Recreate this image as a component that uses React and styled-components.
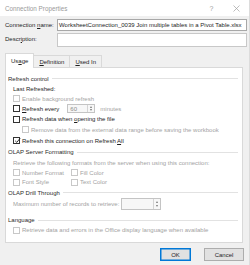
import React from 'react';
import styled, { createGlobalStyle } from 'styled-components';

const Global = createGlobalStyle`
  html, body { margin: 0; padding: 0; background: #f0f0f0; }
  body { font-family: "Liberation Sans", Arial, sans-serif; }
  * { box-sizing: border-box; }
`;

const Window = styled.div`
  width: 250px;
  height: 265px;
  background: #f0f0f0;
  display: flex;
  flex-direction: column;
  overflow: hidden;
  font-size: 6px;
  color: #1e1e1e;
  border-right: 1px solid #dcdcdc;
`;

const TitleBar = styled.div`
  height: 16px;
  background: #fff;
  display: flex;
  align-items: center;
  padding-left: 5px;
  color: #9a9a9a;
  font-size: 6.3px;
`;

const TitleText = styled.div`
  flex: 1;
`;

const TitleButton = styled.div`
  width: 25px;
  height: 16px;
  display: flex;
  align-items: center;
  justify-content: center;
  color: #a0a0a0;
  font-size: 7px;
`;

const Body = styled.div`
  padding: 3px 2px 0 5px;
  display: flex;
  flex-direction: column;
`;

const FieldRow = styled.div`
  display: grid;
  grid-template-columns: 52px 1fr;
  height: ${p => p.$h}px;
  margin-top: ${p => p.$mt || 0}px;
  align-items: ${p => (p.$top ? 'start' : 'center')};
`;

const FieldLabel = styled.label`
  line-height: 8px;
  padding-top: ${p => (p.$top ? 2 : 0)}px;
  color: #1e1e1e;
`;

const TextInput = styled.div`
  height: ${p => p.$h}px;
  background: #fff;
  border: 1px solid ${p => p.$border};
  padding-left: 1px;
  display: flex;
  align-items: center;
  white-space: nowrap;
  overflow: hidden;
  color: #1e1e1e;
`;

const TabStrip = styled.div`
  margin-top: 6px;
  height: 14px;
  display: flex;
  align-items: flex-end;
  position: relative;
  z-index: 1;
`;

const Tab = styled.div`
  height: ${p => (p.$active ? 15 : 12)}px;
  padding: 0 5px;
  display: flex;
  align-items: center;
  background: ${p => (p.$active ? '#fff' : 'transparent')};
  border: 1px solid #d9d9d9;
  border-bottom: none;
  border-left: ${p => (p.$active || p.$first ? '1px solid #d9d9d9' : 'none')};
  margin-bottom: ${p => (p.$active ? -1 : 0)}px;
  color: #1e1e1e;
  white-space: pre;
`;

const Panel = styled.div`
  height: 176px;
  margin-right: 4px;
  background: #fff;
  border: 1px solid #d9d9d9;
  padding: 5px 4px 0 2px;
  display: flex;
  flex-direction: column;
`;

const Row = styled.div`
  height: ${p => p.$h}px;
  margin-top: ${p => p.$mt || 0}px;
  padding-left: ${p => p.$indent || 0}px;
  display: flex;
  align-items: center;
  white-space: nowrap;
  color: ${p => (p.$disabled ? '#a3a3a3' : '#1e1e1e')};
`;

const TwoCol = styled.div`
  height: ${p => p.$h}px;
  padding-left: 5px;
  display: grid;
  grid-template-columns: 58px 1fr;
  align-items: center;
  white-space: nowrap;
`;

const HeadingText = styled.span`
  color: #2b2b2b;
`;

const HeadingLine = styled.span`
  flex: 1;
  height: 1px;
  background: #e2e2e2;
  margin-left: 3px;
`;

const CheckItem = styled.span`
  display: inline-flex;
  align-items: center;
  color: ${p => (p.$disabled ? '#a3a3a3' : '#1e1e1e')};
`;

const CheckLabel = styled.span`
  white-space: pre;
`;

const Box = styled.span`
  width: 7px;
  height: 7px;
  border: 1px solid ${p => (p.$disabled ? '#c8c8c8' : '#333')};
  background: #fff;
  margin-right: 2px;
  position: relative;
  flex: none;
`;

const CheckMark = styled.svg`
  position: absolute;
  left: 0;
  top: -1px;
`;

const Key = styled.span`
  text-decoration: underline;
`;

const Spin = styled.div`
  width: ${p => p.$w}px;
  height: ${p => p.$h}px;
  margin-left: ${p => p.$ml}px;
  margin-right: ${p => p.$mr || 0}px;
  border: 1px solid #c4c4c4;
  background: ${p => p.$bg || '#fff'};
  display: flex;
  align-items: center;
  color: #8a8a8a;
`;

const SpinValue = styled.span`
  flex: 1;
  padding-left: 2px;
`;

const SpinButtons = styled.div`
  width: 7px;
  height: 100%;
  border-left: 1px solid #d4d4d4;
  display: flex;
  flex-direction: column;
  align-items: center;
  justify-content: space-around;
  padding: 1px 0;
`;

const Arrow = styled.span`
  width: 0;
  height: 0;
  border-left: 1.5px solid transparent;
  border-right: 1.5px solid transparent;
  ${p => (p.$up ? 'border-bottom: 2px solid #777;' : 'border-top: 2px solid #777;')}
`;

const ButtonRow = styled.div`
  margin-top: 5px;
  height: 13px;
  display: flex;
  justify-content: flex-end;
  gap: 13px;
  padding-right: 3px;
`;

const Button = styled.div`
  width: ${p => p.$w}px;
  height: 13px;
  display: flex;
  align-items: center;
  justify-content: center;
  background: #e1e1e1;
  border: 1px solid ${p => (p.$primary ? '#0078d7' : '#adadad')};
  box-shadow: ${p => (p.$primary ? 'inset 0 0 0 0.5px #0078d7' : 'none')};
  color: #1e1e1e;
`;

const Check = ({ checked, disabled, children }) => (
  <CheckItem $disabled={disabled}>
    <Box $disabled={disabled}>
      {checked && (
        <CheckMark width="7" height="7" viewBox="0 0 7 7">
          <path d="M1.2 3.8 L2.8 5.4 L6.2 1.2" fill="none" stroke="#222" strokeWidth="0.9" />
        </CheckMark>
      )}
    </Box>
    <CheckLabel>{children}</CheckLabel>
  </CheckItem>
);

const Heading = ({ h, mt, children }) => (
  <Row $h={h} $mt={mt}>
    <HeadingText>{children}</HeadingText>
    <HeadingLine />
  </Row>
);

export default function App() {
  return (
    <>
      <Global />
      <Window>
        <TitleBar>
          <TitleText>Connection Properties</TitleText>
          <TitleButton>?</TitleButton>
          <TitleButton>
            <svg width="7" height="7" viewBox="0 0 7 7">
              <path d="M0.5 0.5 L6.5 6.5 M6.5 0.5 L0.5 6.5" stroke="#a0a0a0" strokeWidth="0.7" />
            </svg>
          </TitleButton>
        </TitleBar>
        <Body>
          <FieldRow $h={12}>
            <FieldLabel>Connection <Key>n</Key>ame:</FieldLabel>
            <TextInput $h={12} $border="#a8a8a8">
              WorksheetConnection_0039 Join multiple tables in a Pivot Table.xlsx
            </TextInput>
          </FieldRow>
          <FieldRow $h={14} $mt={2} $top>
            <FieldLabel $top>Descr<Key>i</Key>ption:</FieldLabel>
            <TextInput $h={14} $border="#c8c8c8" />
          </FieldRow>
          <TabStrip>
            <Tab $active>Us<Key>a</Key>ge</Tab>
            <Tab><Key>D</Key>efinition</Tab>
            <Tab><Key>U</Key>sed In</Tab>
          </TabStrip>
          <Panel>
            <Heading h={11}>Refresh control</Heading>
            <Row $h={10} $indent={5}>Last Refreshed:</Row>
            <Row $h={9} $indent={5}>
              <Check disabled>Enable background refresh</Check>
            </Row>
            <Row $h={11} $indent={5}>
              <Check>
                <Key>R</Key>efresh every
              </Check>
              <Spin $w={28} $h={9} $ml={8} $mr={5} $bg="#f7f7f7">
                <SpinValue>60</SpinValue>
                <SpinButtons>
                  <Arrow $up />
                  <Arrow />
                </SpinButtons>
              </Spin>
              <CheckItem $disabled>minutes</CheckItem>
            </Row>
            <Row $h={10} $indent={5}>
              <Check>
                {'Refresh data when '}<Key>o</Key>pening the file
              </Check>
            </Row>
            <Row $h={11} $indent={14}>
              <Check disabled>Remove data from the external data range before saving the workbook</Check>
            </Row>
            <Row $h={11} $indent={5}>
              <Check checked>
                {'Refresh this connection on Refresh '}<Key>A</Key>ll
              </Check>
            </Row>
            <Heading h={12}>OLAP Server Formatting</Heading>
            <Row $h={10} $indent={5} $disabled>
              Retrieve the following formats from the server when using this connection:
            </Row>
            <TwoCol $h={9}>
              <Check disabled>Number Format</Check>
              <Check disabled>Fill Color</Check>
            </TwoCol>
            <TwoCol $h={10}>
              <Check disabled>Font Style</Check>
              <Check disabled>Text Color</Check>
            </TwoCol>
            <Heading h={11}>OLAP Drill Through</Heading>
            <Row $h={12} $indent={5} $disabled>
              Maximum number of records to retrieve:
              <Spin $w={40} $h={12} $ml={2} $bg="#f7f7f7">
                <SpinValue />
                <SpinButtons>
                  <Arrow $up />
                  <Arrow />
                </SpinButtons>
              </Spin>
            </Row>
            <Heading h={10} mt={5}>Language</Heading>
            <Row $h={10} $indent={5}>
              <Check disabled>Retrieve data and errors in the Office display language when available</Check>
            </Row>
          </Panel>
          <ButtonRow>
            <Button $w={31} $primary>OK</Button>
            <Button $w={40}>Cancel</Button>
          </ButtonRow>
        </Body>
      </Window>
    </>
  );
}
